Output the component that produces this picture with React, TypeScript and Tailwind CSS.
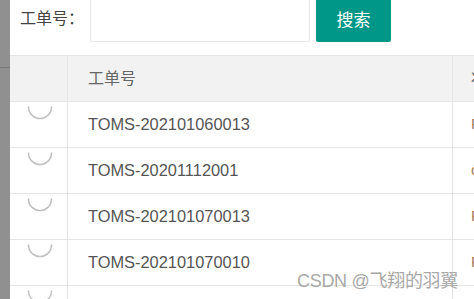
import React from 'react';

const rows = [
  { id: 'TOMS-202101060013', status: 'Processing' },
  { id: 'TOMS-20201112001', status: 'completed' },
  { id: 'TOMS-202101070013', status: 'Processing' },
  { id: 'TOMS-202101070010', status: 'Processing' },
  { id: '', status: '' },
];

const font = { fontFamily: '"Liberation Sans", "Noto Sans CJK SC", sans-serif' };

// half-drawn radio circle (only the lower arc shows in the screenshot)
const Check: React.FC = () => (
  <svg width="26" height="14" viewBox="0 0 26 14" className="mt-[4px]">
    <path d="M1.5 1 A11.5 11.5 0 0 0 24.5 1" fill="none" stroke="#c2c2c2" strokeWidth="1.6" strokeLinecap="round" />
  </svg>
);

const App: React.FC = () => {
  return (
    <div className="w-[474px] h-[299px] overflow-hidden flex bg-white relative" style={font}>
      {/* grey strip at the left edge */}
      <div className="w-[10px] shrink-0 bg-[#909090] flex flex-col">
        <div className="h-[67px]" />
        <div className="h-px bg-[#7a7a7a]" />
      </div>

      <div className="flex-1 flex flex-col min-w-0">
        {/* search bar */}
        <div className="h-[63px] shrink-0 flex items-start pl-[10px] -mt-[8px]">
          <span className="text-[16px] text-[#444] pt-[15px] w-[70px] leading-[24px] whitespace-nowrap">工单号：</span>
          <div className="w-[220px] h-[50px] border border-[#e6e6e6] rounded-[2px] bg-white" />
          <button className="ml-[6px] w-[75px] h-[50px] rounded-[2px] bg-[#009688] text-white text-[17px] pt-[8px]">
            搜索
          </button>
        </div>

        {/* table */}
        <div className="border-t border-[#e6e6e6] grid grid-cols-[58px_385px_1fr] w-[700px]">
          <div className="h-[46px] bg-[#f2f2f2] border-r border-b border-[#e6e6e6]" />
          <div className="h-[46px] bg-[#f2f2f2] border-r border-b border-[#e6e6e6] flex items-center pl-[20px] text-[16px] text-[#666]">
            工单号
          </div>
          <div className="h-[46px] bg-[#f2f2f2] border-b border-[#e6e6e6] flex items-center pl-[18px] text-[16px] text-[#666]">
            状态
          </div>

          {rows.map((row, i) => (
            <React.Fragment key={i}>
              <div className="h-[46px] border-r border-b border-[#e6e6e6] flex items-start pl-[17px]">
                <Check />
              </div>
              <div className="h-[46px] border-r border-b border-[#e6e6e6] flex items-center pl-[20px] text-[16.4px] text-[#555]">
                {row.id}
              </div>
              <div className="h-[46px] border-b border-[#e6e6e6] flex items-center pl-[18px] text-[15px] text-[#a07c62]">
                {row.status}
              </div>
            </React.Fragment>
          ))}
        </div>
      </div>

      {/* watermark */}
      <div className="absolute left-[297px] top-[270px] text-[18px] leading-[22px] text-[#a9a9a9] whitespace-nowrap tracking-[-0.3px]">
        CSDN @飞翔的羽翼
      </div>
    </div>
  );
};

export default App;
